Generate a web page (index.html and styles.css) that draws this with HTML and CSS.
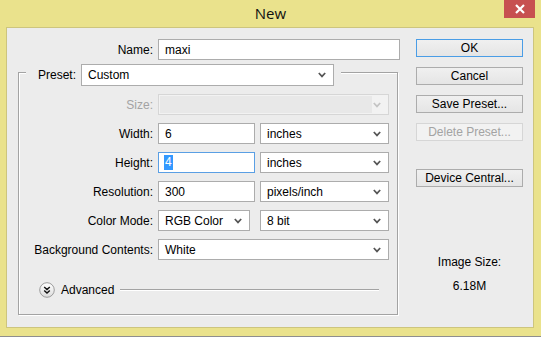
FILE: index.html
```html
<!DOCTYPE html>
<html lang="en">
<head>
    <meta charset="UTF-8">
    <title>New</title>
    <link rel="stylesheet" href="styles.css">
</head>
<body>

<div class="window">
    <div class="titlebar">
        <span class="title">New</span>
        <div class="close">
            <svg width="10" height="10" viewBox="0 0 10 10"><path d="M1 1 L9 9 M9 1 L1 9" stroke="#fff" stroke-width="2.2"/></svg>
        </div>
    </div>

    <div class="client">
        <div class="form">
            <div class="row name-row">
                <span class="label">Name:</span>
                <div class="field name-field">maxi</div>
            </div>

            <div class="group">
                <div class="legend">
                    <span class="legend-label">Preset:</span>
                    <div class="combo preset-combo">
                        <span>Custom</span>
                        <svg class="arrow" width="8" height="6" viewBox="0 0 8 6"><path d="M0.8 1 L4 4.4 L7.2 1" stroke="#555" stroke-width="1.7" fill="none"/></svg>
                    </div>
                </div>

                <div class="row">
                    <span class="label dim">Size:</span>
                    <div class="combo wide disabled">
                        <span class="inner"></span>
                        <svg class="arrow" width="8" height="6" viewBox="0 0 8 6"><path d="M0.8 1 L4 4.4 L7.2 1" stroke="#c4c4c4" stroke-width="1.7" fill="none"/></svg>
                    </div>
                </div>

                <div class="row">
                    <span class="label">Width:</span>
                    <div class="field short">6</div>
                    <div class="combo unit">
                        <span>inches</span>
                        <svg class="arrow" width="8" height="6" viewBox="0 0 8 6"><path d="M0.8 1 L4 4.4 L7.2 1" stroke="#555" stroke-width="1.7" fill="none"/></svg>
                    </div>
                </div>

                <div class="row">
                    <span class="label">Height:</span>
                    <div class="field short focused"><span class="sel">4</span></div>
                    <div class="combo unit">
                        <span>inches</span>
                        <svg class="arrow" width="8" height="6" viewBox="0 0 8 6"><path d="M0.8 1 L4 4.4 L7.2 1" stroke="#555" stroke-width="1.7" fill="none"/></svg>
                    </div>
                </div>

                <div class="row">
                    <span class="label">Resolution:</span>
                    <div class="field short">300</div>
                    <div class="combo unit">
                        <span>pixels/inch</span>
                        <svg class="arrow" width="8" height="6" viewBox="0 0 8 6"><path d="M0.8 1 L4 4.4 L7.2 1" stroke="#555" stroke-width="1.7" fill="none"/></svg>
                    </div>
                </div>

                <div class="row">
                    <span class="label">Color Mode:</span>
                    <div class="combo mode">
                        <span>RGB Color</span>
                        <svg class="arrow" width="8" height="6" viewBox="0 0 8 6"><path d="M0.8 1 L4 4.4 L7.2 1" stroke="#555" stroke-width="1.7" fill="none"/></svg>
                    </div>
                    <div class="combo unit bits">
                        <span>8 bit</span>
                        <svg class="arrow" width="8" height="6" viewBox="0 0 8 6"><path d="M0.8 1 L4 4.4 L7.2 1" stroke="#555" stroke-width="1.7" fill="none"/></svg>
                    </div>
                </div>

                <div class="row">
                    <span class="label">Background Contents:</span>
                    <div class="combo wide">
                        <span>White</span>
                        <svg class="arrow" width="8" height="6" viewBox="0 0 8 6"><path d="M0.8 1 L4 4.4 L7.2 1" stroke="#555" stroke-width="1.7" fill="none"/></svg>
                    </div>
                </div>

                <div class="advanced">
                    <svg width="16" height="16" viewBox="0 0 16 16">
                        <defs>
                            <linearGradient id="knob" x1="0" y1="0" x2="0" y2="1">
                                <stop offset="0" stop-color="#ffffff"/>
                                <stop offset="1" stop-color="#dcdcdc"/>
                            </linearGradient>
                        </defs>
                        <circle cx="8" cy="8" r="7.3" fill="url(#knob)" stroke="#9c9c9c"/>
                        <path d="M5.2 5 L8 7.6 L10.8 5 M5.2 8.4 L8 11 L10.8 8.4" stroke="#111" stroke-width="1.4" fill="none"/>
                    </svg>
                    <span class="adv-text">Advanced</span>
                    <span class="adv-line"></span>
                </div>
            </div>
        </div>

        <div class="buttons">
            <div class="btn default">OK</div>
            <div class="btn">Cancel</div>
            <div class="btn">Save Preset...</div>
            <div class="btn disabled">Delete Preset...</div>
            <div class="btn device">Device Central...</div>
            <div class="size-info">Image Size:</div>
            <div class="size-value">6.18M</div>
        </div>
    </div>
</div>

</body>
</html>
```

FILE: styles.css
```css
body {
    margin: 0;
    font-family: "Liberation Sans", Arial, sans-serif;
    font-size: 12px;
    color: #000;
    background-color: #eae28c;
}
.window {
    width: 541px;
    height: 337px;
    box-sizing: border-box;
    background-color: #eae28c;
    border-bottom: 1px solid #8e8e8e;
    overflow: hidden;
}
.titlebar {
    height: 27px;
    display: grid;
    grid-template-columns: 1fr auto 1fr;
}
.title {
    grid-column: 2;
    font-family: "Open Sans", "Noto Sans", sans-serif;
    font-size: 15px;
    line-height: 27px;
    color: #111;
}
.close {
    grid-column: 3;
    justify-self: end;
    width: 31px;
    height: 18px;
    margin-right: 6px;
    background-color: #c75050;
    display: flex;
    align-items: center;
    justify-content: center;
}
.client {
    margin-left: 6px;
    width: 528px;
    height: 301px;
    box-sizing: border-box;
    border: 1px solid #cdc57e;
    background-color: #ececec;
    display: flex;
}
.form {
    width: 393px;
}
.row {
    display: flex;
    align-items: center;
    height: 21px;
    margin-top: 8px;
}
.label {
    width: 134px;
    margin-right: 5px;
    text-align: right;
    white-space: nowrap;
}
.name-row {
    margin-top: 11px;
}
.name-row .label {
    width: 146px;
}
.dim {
    color: #a3a3a3;
}
.field, .combo {
    height: 21px;
    box-sizing: border-box;
    border: 1px solid #acacac;
    background-color: #fff;
    display: flex;
    align-items: center;
    padding: 0 7px 0 6px;
    white-space: nowrap;
}
.name-field {
    width: 242px;
}
.short {
    width: 97px;
}
.focused {
    border-color: #5a9fe4;
}
.sel {
    background-color: #3399ff;
    color: #fff;
    line-height: 15px;
    padding: 0 1px;
    margin-left: -1px;
}
.combo {
    justify-content: space-between;
}
.unit {
    width: 129px;
    margin-left: 5px;
}
.mode {
    width: 92px;
}
.bits {
    margin-left: 10px;
}
.wide {
    width: 231px;
}
.disabled.combo {
    border-color: #d6d6d6;
    background-color: #f2f2f2;
    padding: 1px 7px 1px 1px;
}
.disabled .inner {
    align-self: stretch;
    width: 212px;
    background-color: #e8e8e8;
}
.group {
    width: 380px;
    height: 243px;
    box-sizing: border-box;
    margin: 12px 0 0 11px;
    border: 1px solid #a3a3a3;
    box-shadow: 1px 1px 0 #fff, inset 1px 1px 0 #fff;
}
.legend {
    width: 315px;
    box-sizing: border-box;
    margin: -9px 0 0 7px;
    padding-right: 7px;
    display: flex;
    align-items: center;
    background-color: #ececec;
}
.legend-label {
    width: 50px;
    margin-right: 5px;
    text-align: right;
}
.preset-combo {
    width: 253px;
    height: 22px;
}
.group .legend + .row {
    margin-top: 8px;
}
.advanced {
    display: flex;
    align-items: center;
    height: 16px;
    margin: 22px 18px 0 20px;
}
.adv-text {
    margin-left: 6px;
}
.adv-line {
    flex: 1;
    margin-left: 6px;
    border-top: 1px solid #a3a3a3;
    border-bottom: 1px solid #fff;
}
.buttons {
    width: 107px;
    margin-left: 16px;
    display: flex;
    flex-direction: column;
}
.btn {
    height: 18px;
    box-sizing: border-box;
    margin-top: 10px;
    border: 1px solid #acacac;
    background: linear-gradient(#f0f0f0, #e5e5e5);
    text-align: center;
    line-height: 16px;
}
.btn:first-child {
    margin-top: 11px;
}
.btn.default {
    border-color: #4a9de6;
}
.btn.disabled {
    color: #a3a3a3;
    border-color: #d6d6d6;
    background: #f2f2f2;
}
.btn.device {
    margin-top: 28px;
}
.size-info, .size-value {
    text-align: center;
    line-height: 14px;
}
.size-info {
    margin-top: 68px;
}
.size-value {
    margin-top: 10px;
}
```
